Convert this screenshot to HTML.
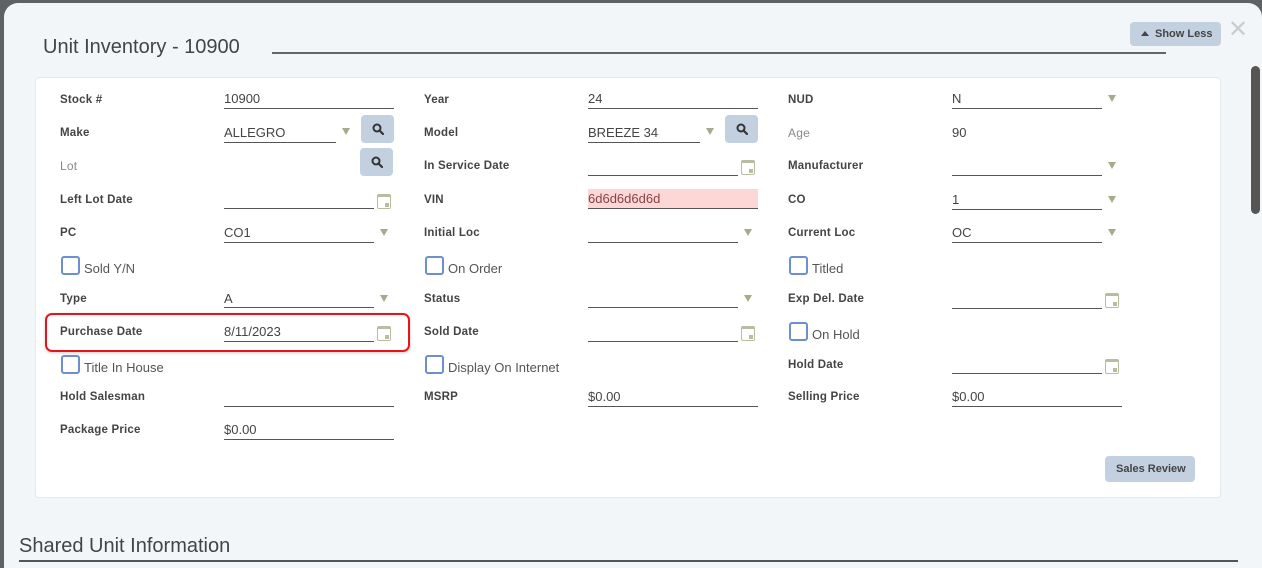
<!DOCTYPE html>
<html><head><meta charset="utf-8"><style>
*{box-sizing:border-box;margin:0;padding:0}
html,body{width:1262px;height:568px;overflow:hidden}
body{background:#5f6163;font-family:"Liberation Sans",sans-serif;position:relative}
.modal{position:absolute;left:4px;top:3px;width:1258px;height:565px;background:#f3f6f9;border-radius:14px 14px 0 0}
.a{position:absolute}
.card{position:absolute;left:35px;top:77px;width:1186px;height:421px;background:#fff;border:1px solid #e6e9ec;border-radius:4px}
.lb{position:absolute;font-size:11.5px;font-weight:bold;color:#444;letter-spacing:.2px}
.lg{color:#888;font-weight:normal;font-size:12px}
.v{position:absolute;font-size:13px;color:#444}
.ln{position:absolute;height:1px;background:#555}
.arr{position:absolute;width:0;height:0;border-left:4.5px solid transparent;border-right:4.5px solid transparent;border-top:7px solid #a5ab8c}
.btn{position:absolute;background:#c3d0e0;border-radius:4px}
.btn svg{position:absolute;left:11px;top:8px}
.cb{position:absolute;width:19px;height:19px;border:2px solid #6d8fd0;border-radius:3px;background:#fff}
.ct{position:absolute;font-size:13px;color:#555}
.cal{position:absolute;width:14px;height:15px;border:1.5px solid #b9bca0;border-top-width:3px;border-radius:2px}
.cal:after{content:"";position:absolute;right:1px;bottom:1px;width:4px;height:4px;background:#b9bca0}
</style></head><body>
<div class="modal"></div>
<div class="a" style="left:43px;top:36px;font-size:20px;color:#444">Unit Inventory - 10900</div>
<div class="ln" style="left:272px;top:52px;width:894px;height:2px;background:#666"></div>
<div class="btn" style="left:1130px;top:22px;width:91px;height:24px"></div>
<div class="a" style="left:1141px;top:31px;width:0;height:0;border-left:4.5px solid transparent;border-right:4.5px solid transparent;border-bottom:5px solid #444"></div>
<div class="a" style="left:1155px;top:28px;font-size:11px;font-weight:bold;color:#444">Show Less</div>
<div class="a" style="left:1228px;top:18px;font-size:24px;color:#ccc;line-height:24px">✕</div>
<div class="a" style="left:1251px;top:66px;width:9px;height:148px;background:#555;border-radius:5px"></div>
<div class="card"></div>

<div class="lb" style="left:60px;top:94px">Stock #</div><div class="v" style="left:224px;top:91px">10900</div><div class="ln" style="left:224px;top:108px;width:170px"></div>
<div class="lb" style="left:424px;top:94px">Year</div><div class="v" style="left:588px;top:91px">24</div><div class="ln" style="left:588px;top:108px;width:170px"></div>
<div class="lb" style="left:788px;top:94px">NUD</div><div class="v" style="left:952px;top:91px">N</div><div class="ln" style="left:952px;top:108px;width:150px"></div><div class="arr" style="left:1108px;top:95px"></div>

<div class="lb" style="left:60px;top:127px">Make</div><div class="v" style="left:224px;top:125px">ALLEGRO</div><div class="ln" style="left:224px;top:142px;width:112px"></div><div class="arr" style="left:342px;top:128px"></div>
<div class="btn" style="left:361px;top:115px;width:33px;height:28px"><svg width="12" height="12" viewBox="0 0 12 12"><circle cx="5" cy="5" r="3.5" fill="none" stroke="#333" stroke-width="2"/><path d="M7.5 7.5L11 11" stroke="#333" stroke-width="2.2" stroke-linecap="round"/></svg></div>
<div class="lb" style="left:424px;top:127px">Model</div><div class="v" style="left:588px;top:125px">BREEZE 34</div><div class="ln" style="left:588px;top:142px;width:112px"></div><div class="arr" style="left:706px;top:128px"></div>
<div class="btn" style="left:725px;top:115px;width:33px;height:28px"><svg width="12" height="12" viewBox="0 0 12 12"><circle cx="5" cy="5" r="3.5" fill="none" stroke="#333" stroke-width="2"/><path d="M7.5 7.5L11 11" stroke="#333" stroke-width="2.2" stroke-linecap="round"/></svg></div>
<div class="lb lg" style="left:788px;top:126px">Age</div><div class="v" style="left:952px;top:125px">90</div>

<div class="lb lg" style="left:60px;top:159px">Lot</div>
<div class="btn" style="left:360px;top:148px;width:33px;height:28px"><svg width="12" height="12" viewBox="0 0 12 12"><circle cx="5" cy="5" r="3.5" fill="none" stroke="#333" stroke-width="2"/><path d="M7.5 7.5L11 11" stroke="#333" stroke-width="2.2" stroke-linecap="round"/></svg></div>
<div class="lb" style="left:424px;top:160px">In Service Date</div><div class="ln" style="left:588px;top:175px;width:150px"></div><div class="cal" style="left:741px;top:160px"></div>
<div class="lb" style="left:788px;top:160px">Manufacturer</div><div class="ln" style="left:952px;top:175px;width:150px"></div><div class="arr" style="left:1108px;top:162px"></div>

<div class="lb" style="left:60px;top:194px">Left Lot Date</div><div class="ln" style="left:224px;top:208px;width:150px"></div><div class="cal" style="left:377px;top:194px"></div>
<div class="lb" style="left:424px;top:194px">VIN</div><div class="a" style="left:588px;top:189px;width:170px;height:20px;background:#fdd6d6"></div><div class="v" style="left:588px;top:191px;color:#844">6d6d6d6d6d</div><div class="ln" style="left:588px;top:208px;width:170px"></div>
<div class="lb" style="left:788px;top:194px">CO</div><div class="v" style="left:952px;top:192px">1</div><div class="ln" style="left:952px;top:209px;width:150px"></div><div class="arr" style="left:1108px;top:196px"></div>

<div class="lb" style="left:60px;top:227px">PC</div><div class="v" style="left:224px;top:225px">CO1</div><div class="ln" style="left:224px;top:242px;width:150px"></div><div class="arr" style="left:380px;top:229px"></div>
<div class="lb" style="left:424px;top:227px">Initial Loc</div><div class="ln" style="left:588px;top:242px;width:150px"></div><div class="arr" style="left:744px;top:229px"></div>
<div class="lb" style="left:788px;top:227px">Current Loc</div><div class="v" style="left:952px;top:225px">OC</div><div class="ln" style="left:952px;top:242px;width:150px"></div><div class="arr" style="left:1108px;top:229px"></div>

<div class="cb" style="left:61px;top:256px"></div><div class="ct" style="left:84px;top:261px">Sold Y/N</div>
<div class="cb" style="left:425px;top:256px"></div><div class="ct" style="left:448px;top:261px">On Order</div>
<div class="cb" style="left:789px;top:256px"></div><div class="ct" style="left:812px;top:261px">Titled</div>

<div class="lb" style="left:60px;top:293px">Type</div><div class="v" style="left:224px;top:291px">A</div><div class="ln" style="left:224px;top:307px;width:150px"></div><div class="arr" style="left:380px;top:295px"></div>
<div class="lb" style="left:424px;top:293px">Status</div><div class="ln" style="left:588px;top:307px;width:150px"></div><div class="arr" style="left:744px;top:295px"></div>
<div class="lb" style="left:788px;top:293px">Exp Del. Date</div><div class="ln" style="left:952px;top:308px;width:150px"></div><div class="cal" style="left:1105px;top:293px"></div>

<div class="a" style="left:45px;top:313px;width:365px;height:39px;border:2px solid #e8141a;border-radius:7px;box-shadow:0 1px 3px rgba(0,0,0,.2)"></div>
<div class="lb" style="left:60px;top:326px">Purchase Date</div><div class="v" style="left:224px;top:324px">8/11/2023</div><div class="ln" style="left:224px;top:341px;width:150px"></div><div class="cal" style="left:377px;top:326px"></div>
<div class="lb" style="left:424px;top:326px">Sold Date</div><div class="ln" style="left:588px;top:341px;width:150px"></div><div class="cal" style="left:741px;top:326px"></div>
<div class="cb" style="left:789px;top:322px"></div><div class="ct" style="left:812px;top:327px">On Hold</div>

<div class="cb" style="left:61px;top:355px"></div><div class="ct" style="left:84px;top:360px">Title In House</div>
<div class="cb" style="left:425px;top:355px"></div><div class="ct" style="left:448px;top:360px">Display On Internet</div>
<div class="lb" style="left:788px;top:359px">Hold Date</div><div class="ln" style="left:952px;top:373px;width:150px"></div><div class="cal" style="left:1105px;top:359px"></div>

<div class="lb" style="left:60px;top:391px">Hold Salesman</div><div class="ln" style="left:224px;top:406px;width:170px"></div>
<div class="lb" style="left:424px;top:391px">MSRP</div><div class="v" style="left:588px;top:389px">$0.00</div><div class="ln" style="left:588px;top:406px;width:170px"></div>
<div class="lb" style="left:788px;top:391px">Selling Price</div><div class="v" style="left:952px;top:389px">$0.00</div><div class="ln" style="left:952px;top:406px;width:170px"></div>

<div class="lb" style="left:60px;top:424px">Package Price</div><div class="v" style="left:224px;top:422px">$0.00</div><div class="ln" style="left:224px;top:439px;width:170px"></div>
<div class="btn" style="left:1105px;top:456px;width:90px;height:26px"></div><div class="a" style="left:1116px;top:463px;font-size:11px;font-weight:bold;color:#444">Sales Review</div>

<div class="a" style="left:19px;top:535px;font-size:20px;color:#444">Shared Unit Information</div>
<div class="ln" style="left:19px;top:560px;width:1219px;height:2px;background:#555"></div>
</body></html>
